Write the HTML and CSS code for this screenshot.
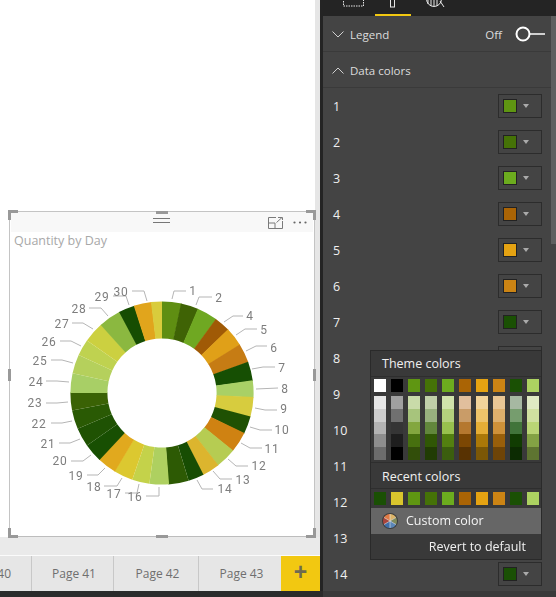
FILE: index.html
```html
<!DOCTYPE html>
<html lang="en">
<head>
<meta charset="utf-8">
<title>Report</title>
<link rel="stylesheet" href="styles.css">
</head>
<body>
<div class="app">
  <div class="main">
    <section class="report">
      <div class="canvas">
        <div class="visual">
          <div class="visual-head">
            <span class="grip"></span>
            <svg class="focus" viewBox="0 0 15 12" width="15" height="12"><path d="M8 .5H.5V11.500H14.500V4M.5 6H7V11.500M8.500 5.500 14 .5M10 .5H14.500V3" fill="none" stroke="#7a7a7a"/></svg>
            <svg class="dots" viewBox="0 0 14 3" width="14" height="3"><circle cx="1.500" cy="1.500" r="1.100" fill="#666"/><circle cx="7" cy="1.500" r="1.100" fill="#666"/><circle cx="12.500" cy="1.500" r="1.100" fill="#666"/></svg>
          </div>
          <div class="visual-title">Quantity by Day</div>
          <svg class="donut" viewBox="0 0 306 326" width="306" height="326">
            <g transform="translate(-9 -211)">
              <g class="ring" transform="rotate(-90 162 393)" fill="none" stroke-width="37">
                <circle cx="162" cy="393" r="73.100" pathLength="360" stroke="#5f8e12" stroke-dasharray="12.400 347.600" stroke-dashoffset="0"/>
                <circle cx="162" cy="393" r="73.100" pathLength="360" stroke="#3f6305" stroke-dasharray="11.400 348.600" stroke-dashoffset="-12"/>
                <circle cx="162" cy="393" r="73.100" pathLength="360" stroke="#6fa822" stroke-dasharray="13.400 346.600" stroke-dashoffset="-23"/>
                <circle cx="162" cy="393" r="73.100" pathLength="360" stroke="#a05a06" stroke-dasharray="10.400 349.600" stroke-dashoffset="-36"/>
                <circle cx="162" cy="393" r="73.100" pathLength="360" stroke="#e0a018" stroke-dasharray="12.400 347.600" stroke-dashoffset="-46"/>
                <circle cx="162" cy="393" r="73.100" pathLength="360" stroke="#c67c14" stroke-dasharray="12.400 347.600" stroke-dashoffset="-58"/>
                <circle cx="162" cy="393" r="73.100" pathLength="360" stroke="#164f03" stroke-dasharray="12.400 347.600" stroke-dashoffset="-70"/>
                <circle cx="162" cy="393" r="73.100" pathLength="360" stroke="#a9d066" stroke-dasharray="10.900 349.100" stroke-dashoffset="-82"/>
                <circle cx="162" cy="393" r="73.100" pathLength="360" stroke="#d7cc3e" stroke-dasharray="12.900 347.100" stroke-dashoffset="-92.500"/>
                <circle cx="162" cy="393" r="73.100" pathLength="360" stroke="#1f5103" stroke-dasharray="11.400 348.600" stroke-dashoffset="-105"/>
                <circle cx="162" cy="393" r="73.100" pathLength="360" stroke="#cf8212" stroke-dasharray="13.400 346.600" stroke-dashoffset="-116"/>
                <circle cx="162" cy="393" r="73.100" pathLength="360" stroke="#b6cc52" stroke-dasharray="13.400 346.600" stroke-dashoffset="-129"/>
                <circle cx="162" cy="393" r="73.100" pathLength="360" stroke="#dcb52e" stroke-dasharray="11.400 348.600" stroke-dashoffset="-142"/>
                <circle cx="162" cy="393" r="73.100" pathLength="360" stroke="#174d03" stroke-dasharray="10 350" stroke-dashoffset="-153"/>
                <circle cx="162" cy="393" r="73.100" pathLength="360" stroke="#2d5a04" stroke-dasharray="12.900 347.100" stroke-dashoffset="-163"/>
                <circle cx="162" cy="393" r="73.100" pathLength="360" stroke="#aed060" stroke-dasharray="12.500 347.500" stroke-dashoffset="-175.500"/>
                <circle cx="162" cy="393" r="73.100" pathLength="360" stroke="#c4d24a" stroke-dasharray="11 349" stroke-dashoffset="-188"/>
                <circle cx="162" cy="393" r="73.100" pathLength="360" stroke="#dcc830" stroke-dasharray="12.400 347.600" stroke-dashoffset="-199"/>
                <circle cx="162" cy="393" r="73.100" pathLength="360" stroke="#e1a91e" stroke-dasharray="12.400 347.600" stroke-dashoffset="-211"/>
                <circle cx="162" cy="393" r="73.100" pathLength="360" stroke="#184f02" stroke-dasharray="12 348" stroke-dashoffset="-223"/>
                <circle cx="162" cy="393" r="73.100" pathLength="360" stroke="#1f5203" stroke-dasharray="12 348" stroke-dashoffset="-235"/>
                <circle cx="162" cy="393" r="73.100" pathLength="360" stroke="#2a5a04" stroke-dasharray="12 348" stroke-dashoffset="-247"/>
                <circle cx="162" cy="393" r="73.100" pathLength="360" stroke="#3a6205" stroke-dasharray="11.400 348.600" stroke-dashoffset="-259"/>
                <circle cx="162" cy="393" r="73.100" pathLength="360" stroke="#a8cf66" stroke-dasharray="12.500 347.500" stroke-dashoffset="-270"/>
                <circle cx="162" cy="393" r="73.100" pathLength="360" stroke="#b5d05c" stroke-dasharray="12 348" stroke-dashoffset="-282.500"/>
                <circle cx="162" cy="393" r="73.100" pathLength="360" stroke="#bfd250" stroke-dasharray="10.500 349.500" stroke-dashoffset="-294.500"/>
                <circle cx="162" cy="393" r="73.100" pathLength="360" stroke="#ccd040" stroke-dasharray="13.400 346.600" stroke-dashoffset="-305"/>
                <circle cx="162" cy="393" r="73.100" pathLength="360" stroke="#8bb840" stroke-dasharray="14.400 345.600" stroke-dashoffset="-318"/>
                <circle cx="162" cy="393" r="73.100" pathLength="360" stroke="#164d02" stroke-dasharray="10.400 349.600" stroke-dashoffset="-332"/>
                <circle cx="162" cy="393" r="73.100" pathLength="360" stroke="#e1a51c" stroke-dasharray="11.400 348.600" stroke-dashoffset="-342"/>
                <circle cx="162" cy="393" r="73.100" pathLength="360" stroke="#d9cc3c" stroke-dasharray="7 353" stroke-dashoffset="-353"/>
              </g>
              <g class="leaders">
                <polyline points="172,299 174,291 186,291"/><polyline points="196,305 199,297 212,297"/>
                <polyline points="224,322 233,316 243,316"/><polyline points="236,335 245,329 257,329"/>
                <polyline points="246,351 256,346 267,346"/><polyline points="252,369 263,367 275,367"/>
                <polyline points="256,389 278,388"/><polyline points="255,408 265,410 277,410"/>
                <polyline points="250,427 260,430 272,430"/><polyline points="241,443 250,448 262,448"/>
                <polyline points="228,459 236,466 248,466"/><polyline points="213,471 220,479 232,479"/>
                <polyline points="197,480 202,489 213,489"/><polyline points="159,487 159,496 146,496"/>
                <polyline points="139,484 137,493 125,493"/><polyline points="122,478 117,486 104,486"/>
                <polyline points="105,468 98,475 87,475"/><polyline points="91,455 83,461 71,461"/>
                <polyline points="80,439 70,443 59,443"/><polyline points="72,421 62,423 51,423"/>
                <polyline points="68,402 57,403 46,403"/><polyline points="69,382 57,381 46,381"/>
                <polyline points="73,363 62,360 51,360"/><polyline points="81,346 71,341 60,341"/>
                <polyline points="93,329 83,323 72,323"/><polyline points="108,316 101,308 89,308"/>
                <polyline points="113,296 126,296 129,305"/><polyline points="132,291 144,291 147,301"/>
              </g>
              <g class="labels">
                <text x="193" y="295">1</text><text x="219" y="302">2</text><text x="250" y="320">4</text>
                <text x="264" y="334">5</text><text x="274" y="352">6</text><text x="282" y="372">7</text>
                <text x="285" y="393">8</text><text x="284" y="413">9</text><text x="282" y="434">10</text>
                <text x="272" y="453">11</text><text x="259" y="470">12</text><text x="243" y="484">13</text>
                <text x="225" y="493">14</text><text x="135" y="501">16</text><text x="114" y="498">17</text>
                <text x="94" y="491">18</text><text x="76" y="480">19</text><text x="60" y="465">20</text>
                <text x="48" y="448">21</text><text x="39" y="428">22</text><text x="35" y="407">23</text>
                <text x="36" y="386">24</text><text x="40" y="365">25</text><text x="49" y="346">26</text>
                <text x="62" y="328">27</text><text x="79" y="313">28</text><text x="102" y="301">29</text>
                <text x="121" y="296">30</text>
              </g>
            </g>
          </svg>
          <i class="handle tl"></i><i class="handle tr"></i><i class="handle bl"></i><i class="handle br"></i>
          <i class="handle tm"></i><i class="handle bm"></i><i class="handle ml"></i><i class="handle mr"></i>
        </div>
      </div>
      <nav class="tabs">
        <div class="tab t40">40</div>
        <div class="tab t41">Page 41</div>
        <div class="tab t42">Page 42</div>
        <div class="tab t43">Page 43</div>
        <div class="add">+</div>
      </nav>
    </section>
    <aside class="panel">
      <div class="tool-strip">
        <svg class="tool-icons" viewBox="0 0 130 16" width="130" height="16">
          <rect x="13.500" y="-3" width="20" height="9" fill="none" stroke="#e8e8e8" stroke-dasharray="1.500 1"/>
          <rect x="60.500" y="-3" width="4" height="10" fill="none" stroke="#e8e8e8"/>
          <circle cx="104" cy="-1" r="7.500" fill="none" stroke="#e8e8e8"/>
          <path d="M98 -1V4M101 -1V6M104 -1V6M107 -1V6M110 1 114 7" fill="none" stroke="#e8e8e8"/>
        </svg>
        <span class="tool-active"></span>
      </div>
      <div class="sections">
        <div class="section-row legend">
          <svg class="chev" viewBox="0 0 12 7" width="12" height="7"><path d="M.5.500 6 6 11.500.500" fill="none" stroke="#d0d0d0"/></svg>
          <span class="section-name">Legend</span>
          <span class="off">Off</span>
          <svg class="toggle" viewBox="0 0 31 16" width="31" height="16"><circle cx="8" cy="8" r="6.500" fill="#444" stroke="#fff" stroke-width="2"/><path d="M15 8H30" stroke="#fff" stroke-width="1.500"/></svg>
        </div>
        <div class="section-row datacolors">
          <svg class="chev" viewBox="0 0 12 7" width="12" height="7"><path d="M.5 6.500 6 1 11.500 6.500" fill="none" stroke="#d0d0d0"/></svg>
          <span class="section-name">Data colors</span>
        </div>
        <div class="color-row"><span>1</span><div class="picker"><i class="sw c-1"></i><b></b></div></div>
        <div class="color-row"><span>2</span><div class="picker"><i class="sw c-2"></i><b></b></div></div>
        <div class="color-row"><span>3</span><div class="picker"><i class="sw c-3"></i><b></b></div></div>
        <div class="color-row"><span>4</span><div class="picker"><i class="sw c-4"></i><b></b></div></div>
        <div class="color-row"><span>5</span><div class="picker"><i class="sw c-5"></i><b></b></div></div>
        <div class="color-row"><span>6</span><div class="picker"><i class="sw c-6"></i><b></b></div></div>
        <div class="color-row"><span>7</span><div class="picker"><i class="sw c-7"></i><b></b></div></div>
        <div class="color-row"><span>8</span><div class="picker"><i class="sw c-7"></i><b></b></div></div>
        <div class="color-row"><span>9</span></div>
        <div class="color-row"><span>10</span></div>
        <div class="color-row"><span>11</span></div>
        <div class="color-row"><span>12</span></div>
        <div class="color-row"><span>13</span></div>
        <div class="color-row"><span>14</span><div class="picker"><i class="sw c-7"></i><b></b></div></div>
      </div>
      <div class="scrollbar"></div>
      <div class="popup">
        <div class="pop-title">Theme colors</div>
        <div class="theme-top">
          <i class="t-white"></i><i class="t-black"></i><i class="c-1"></i><i class="c-2"></i><i class="c-3"></i><i class="c-4"></i><i class="c-5"></i><i class="c-6"></i><i class="c-7"></i><i class="c-8"></i>
        </div>
        <div class="theme-shades">
          <div class="col"><i class="s-e6"></i><i class="s-cd"></i><i class="s-b3"></i><i class="s-8e"></i><i class="s-6c"></i></div>
          <div class="col"><i class="s-a0"></i><i class="s-70"></i><i class="s-35"></i><i class="s-1e"></i><i class="s-00"></i></div>
          <div class="col"><i class="g1a"></i><i class="g1b"></i><i class="g1c"></i><i class="g1d"></i><i class="g1e"></i></div>
          <div class="col"><i class="g2a"></i><i class="g2b"></i><i class="g2c"></i><i class="g2d"></i><i class="g2e"></i></div>
          <div class="col"><i class="g3a"></i><i class="g3b"></i><i class="g3c"></i><i class="g3d"></i><i class="g3e"></i></div>
          <div class="col"><i class="o4a"></i><i class="o4b"></i><i class="o4c"></i><i class="o4d"></i><i class="o4e"></i></div>
          <div class="col"><i class="o5a"></i><i class="o5b"></i><i class="o5c"></i><i class="o5d"></i><i class="o5e"></i></div>
          <div class="col"><i class="o6a"></i><i class="o6b"></i><i class="o6c"></i><i class="o6d"></i><i class="o6e"></i></div>
          <div class="col"><i class="g7a"></i><i class="g7b"></i><i class="g7c"></i><i class="g7d"></i><i class="g7e"></i></div>
          <div class="col"><i class="g8a"></i><i class="g8b"></i><i class="g8c"></i><i class="g8d"></i><i class="g8e"></i></div>
        </div>
        <div class="pop-title recent">Recent colors</div>
        <div class="theme-top recent-row">
          <i class="c-7"></i><i class="c-y"></i><i class="c-1"></i><i class="c-2"></i><i class="c-3"></i><i class="c-4"></i><i class="c-5"></i><i class="c-6"></i><i class="c-7"></i><i class="c-8"></i>
        </div>
        <div class="custom">
          <svg class="wheel" viewBox="0 0 16 16" width="16" height="16">
            <circle cx="8" cy="8" r="8" fill="#3c3c3c"/>
            <g fill="none" stroke-width="7" transform="rotate(-90 8 8)">
              <circle cx="8" cy="8" r="3.500" pathLength="360" stroke="#dcb468" stroke-dasharray="60 300"/>
              <circle cx="8" cy="8" r="3.500" pathLength="360" stroke="#7f8a5a" stroke-dasharray="60 300" stroke-dashoffset="-60"/>
              <circle cx="8" cy="8" r="3.500" pathLength="360" stroke="#5a86b8" stroke-dasharray="60 300" stroke-dashoffset="-120"/>
              <circle cx="8" cy="8" r="3.500" pathLength="360" stroke="#3f6ea8" stroke-dasharray="60 300" stroke-dashoffset="-180"/>
              <circle cx="8" cy="8" r="3.500" pathLength="360" stroke="#a8443c" stroke-dasharray="60 300" stroke-dashoffset="-240"/>
              <circle cx="8" cy="8" r="3.500" pathLength="360" stroke="#e07a44" stroke-dasharray="60 300" stroke-dashoffset="-300"/>
            </g>
            <path d="M8 8V1M8 8 14 4.500M8 8 14 11.500M8 8V15M8 8 2 11.500M8 8 2 4.500" stroke="#e8e8e8" stroke-width=".6"/>
          </svg>
          <span>Custom color</span>
        </div>
        <div class="revert">Revert to default</div>
      </div>
    </aside>
  </div>
  <div class="bottom"></div>
</div>
</body>
</html>
```
FILE: styles.css
```css
* { box-sizing: border-box; }
html, body { margin: 0; height: 100%; overflow: hidden; background: #2b2b2b; }
body { font-family: "Open Sans", "Liberation Sans", sans-serif; }
i { display: block; }

.app { width: 556px; height: 597px; display: flex; flex-direction: column; }
.main { flex: 0 0 591px; display: flex; min-height: 0; }
.bottom { flex: 1; background: linear-gradient(90deg, #2b2b2b 323px, #3a3a3a 323px); }

/* report side */
.report { width: 320px; display: flex; flex-direction: column; background: #eaeaea; }
.canvas { height: 537px; background: #fff; padding: 211px 0 0 9px; width: 315px; box-shadow: 5px 0 0 #e6e6e6; }
.visual { position: relative; width: 306px; height: 326px; border: 1px solid #c4c4c4; border-bottom-color: #bdbdbd; background: #fff; }
.visual-head { height: 20px; margin: 0 1px; background: #f8f8f8; display: flex; align-items: center; justify-content: flex-end; gap: 10px; padding-right: 6px; position: relative; }
.grip { position: absolute; left: 142px; top: 6px; width: 17px; height: 5px; border-top: 1px solid #777; border-bottom: 1px solid #777; }
.focus { margin-top: 1px; }
.dots { margin-right: 0; }
.visual-title { font: 12.500px/16px "Open Sans", sans-serif; color: #a8a8a8; padding: 1px 0 0 4px; }
.donut { position: absolute; left: -1px; top: -1px; will-change: transform; }
.leaders polyline { fill: none; stroke: #b5b5b5; stroke-width: 1; }
.labels text { font: 12px "Roboto", sans-serif; fill: #7d7d7d; text-anchor: middle; letter-spacing: .7px; }

.handle { position: absolute; background: #999; }
.tl, .tr, .bl, .br { width: 10px; height: 10px; }
.tl { left: -2px; top: -2px; clip-path: polygon(0 0, 100% 0, 100% 30%, 30% 30%, 30% 100%, 0 100%); }
.tr { right: -2px; top: -2px; clip-path: polygon(0 0, 100% 0, 100% 100%, 70% 100%, 70% 30%, 0 30%); }
.bl { left: -2px; bottom: -2px; clip-path: polygon(0 0, 30% 0, 30% 70%, 100% 70%, 100% 100%, 0 100%); }
.br { right: -2px; bottom: -2px; clip-path: polygon(70% 0, 100% 0, 100% 100%, 0 100%, 0 70%, 70% 70%); }
.tm, .bm { left: 146px; width: 12px; height: 3px; }
.tm { top: -1px; } .bm { bottom: -2px; }
.ml, .mr { top: 157px; width: 3px; height: 12px; }
.ml { left: -2px; } .mr { right: -2px; }

.tabs { margin-top: 18px; height: 36px; border-top: 1px solid #fbfbfb; display: flex; background: #e6e6e6; font-size: 12px; color: #6f6f6f; }
.tab { display: flex; align-items: center; justify-content: center; border-right: 1px solid #c8c8c8; padding-left: 3px; }
.t40 { width: 32px; padding-left: 0; padding-right: 20px; justify-content: flex-end; }
.t41 { width: 82px; }
.t42 { width: 85px; }
.t43 { width: 82px; border-right: 0; }
.add { width: 39px; background: #f2c811; color: #6e6a50; font: 700 23px/32px "Liberation Sans", sans-serif; text-align: center; }

/* format panel */
.panel { position: relative; width: 236px; border-left: 3px solid #242424; background: #444; color: #eee; overflow: hidden; }
.tool-strip { position: relative; height: 16px; background: #242424; margin-left: -3px; }
.tool-icons { position: absolute; left: 10px; top: 0; }
.tool-active { position: absolute; left: 55px; top: 14px; width: 36px; height: 2px; background: #f2c811; }
.sections { font-size: 11.500px; }
.section-row { height: 36px; display: flex; align-items: center; border-bottom: 1px solid #3a3a3a; padding: 1px 8px 0 9px; }
.datacolors { padding-top: 2px; }
.chev { margin-right: 6px; flex: none; }
.section-name { flex: 1; color: #dcdcdc; }
.off { margin-right: 13px; color: #dcdcdc; }
.toggle { margin-right: 2px; }
.color-row { height: 36px; display: flex; align-items: center; justify-content: space-between; padding: 0 14px 0 10px; font-size: 12.500px; color: #f0f0f0; }
.picker { width: 44px; height: 24px; border: 1px solid #2c2c2c; display: flex; align-items: center; padding-left: 4px; gap: 6px; }
.sw { width: 14px; height: 14px; border: 1px solid #222; }
.picker b { width: 0; height: 0; border-left: 3.500px solid transparent; border-right: 3.500px solid transparent; border-top: 4px solid #aaa; }
.scrollbar { position: absolute; right: 0; top: 16px; width: 5px; height: 228px; background: #5f5f5f; }

/* colour popup */
.popup { position: absolute; left: 47px; top: 350px; width: 172px; height: 210px; background: #393939; border: 1px solid #2a2a2a; }
.pop-title { height: 26px; padding: 4px 0 0 11px; font-size: 12.500px; line-height: 17px; color: #f0f0f0; border-bottom: 1px solid #2e2e2e; }
.theme-top { display: flex; gap: 5px; padding-left: 3px; margin-top: 2px; }
.theme-top i { width: 12px; height: 13px; }
.theme-shades { display: flex; gap: 5px; padding-left: 3px; margin-top: 4px; }
.col { display: flex; flex-direction: column; width: 12px; }
.col i { height: 12.800px; }
.pop-title.recent { margin-top: 2px; height: 27px; padding-top: 5px; border-top: 1px solid #2e2e2e; }
.recent-row { margin-top: 3px; }
.custom { margin-top: 3px; height: 26px; background: #666; display: flex; align-items: center; gap: 8px; padding-left: 11px; font-size: 12.500px; color: #f4f4f4; }
.revert { height: 26px; text-align: right; padding: 3px 15px 0 0; font-size: 12.500px; line-height: 20px; color: #f0f0f0; }

.c-1 { background: #5f9612; } .c-2 { background: #457207; } .c-3 { background: #6cac1e; }
.c-4 { background: #aa6405; } .c-5 { background: #e5a312; } .c-6 { background: #cc8414; }
.c-7 { background: #1a5004; } .c-8 { background: #acd261; } .c-y { background: #d9c52d; }
.t-white { background: #fff; } .t-black { background: #000; }
.s-e6 { background: #e6e6e6; } .s-cd { background: #cdcdcd; } .s-b3 { background: #b3b3b3; } .s-8e { background: #8e8e8e; } .s-6c { background: #6c6c6c; }
.s-a0 { background: #a0a0a0; } .s-70 { background: #707070; } .s-35 { background: #353535; } .s-1e { background: #1e1e1e; } .s-00 { background: #000; }
.g1a { background: #c9dba9; } .g1b { background: #a7c47c; } .g1c { background: #83a73f; } .g1d { background: #47700f; } .g1e { background: #324e0a; }
.g2a { background: #c0cfa9; } .g2b { background: #98b17e; } .g2c { background: #62873c; } .g2d { background: #305705; } .g2e { background: #213c04; }
.g3a { background: #d0e3ab; } .g3b { background: #b4d17d; } .g3c { background: #98c14e; } .g3d { background: #538010; } .g3e { background: #3b5e0e; }
.o4a { background: #e1bf9d; } .o4b { background: #c99c68; } .o4c { background: #b5782f; } .o4d { background: #7c4703; } .o4e { background: #583202; }
.o5a { background: #f2d49a; } .o5b { background: #edc36a; } .o5c { background: #e5ae36; } .o5d { background: #ab7808; } .o5e { background: #7b5706; }
.o6a { background: #e9c695; } .o6b { background: #deaf6c; } .o6c { background: #cf9139; } .o6d { background: #995f0a; } .o6e { background: #6e4407; }
.g7a { background: #a6b8a2; } .g7b { background: #769d6e; } .g7c { background: #41743a; } .g7d { background: #113c02; } .g7e { background: #0c2b02; }
.g8a { background: #dfeac3; } .g8b { background: #d0e0a0; } .g8c { background: #bad575; } .g8d { background: #83a244; } .g8e { background: #5e7431; }
```
